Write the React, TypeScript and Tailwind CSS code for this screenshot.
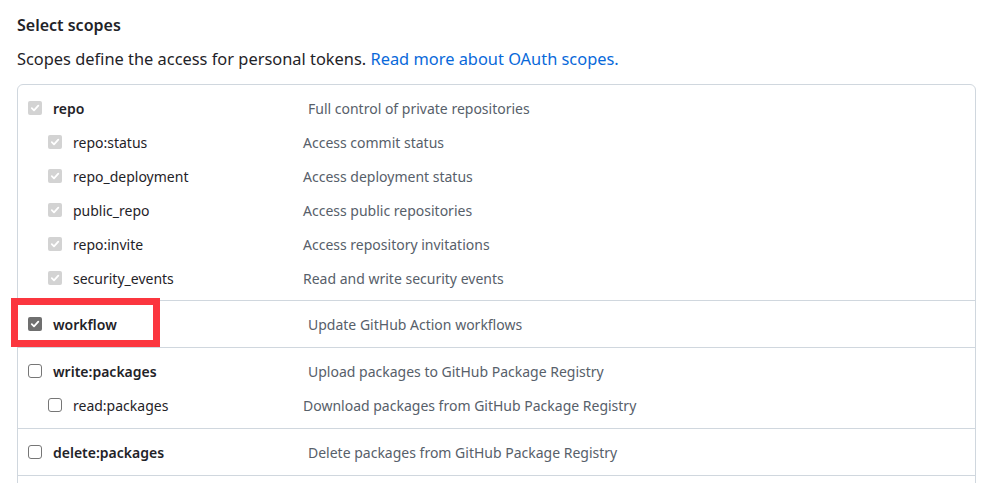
import React from 'react'

type State = 'disabled' | 'checked' | 'unchecked'

type Scope = {
  name: string
  desc: string
  state: State
  children?: { name: string; desc: string; state: State }[]
}

const SCOPES: Scope[] = [
  {
    name: 'repo',
    desc: 'Full control of private repositories',
    state: 'disabled',
    children: [
      { name: 'repo:status', desc: 'Access commit status', state: 'disabled' },
      { name: 'repo_deployment', desc: 'Access deployment status', state: 'disabled' },
      { name: 'public_repo', desc: 'Access public repositories', state: 'disabled' },
      { name: 'repo:invite', desc: 'Access repository invitations', state: 'disabled' },
      { name: 'security_events', desc: 'Read and write security events', state: 'disabled' },
    ],
  },
  { name: 'workflow', desc: 'Update GitHub Action workflows', state: 'checked' },
  {
    name: 'write:packages',
    desc: 'Upload packages to GitHub Package Registry',
    state: 'unchecked',
    children: [{ name: 'read:packages', desc: 'Download packages from GitHub Package Registry', state: 'unchecked' }],
  },
  { name: 'delete:packages', desc: 'Delete packages from GitHub Package Registry', state: 'unchecked' },
]

function Box({ state }: { state: State }) {
  if (state === 'unchecked') {
    return <span className="block shrink-0 w-[14px] h-[14px] rounded-[3px] border border-[#767676] bg-white" />
  }
  return (
    <span
      className={
        'flex shrink-0 items-center justify-center w-[14px] h-[14px] rounded-[2px] ' +
        (state === 'checked' ? 'bg-[#6f6f6f]' : 'bg-[#d3d3d3]')
      }
    >
      <svg width="10" height="10" viewBox="0 0 10 10" fill="none">
        <path d="M1.8 5.2 L4 7.3 L8.3 2.6" stroke="white" strokeWidth="1.8" strokeLinecap="round" strokeLinejoin="round" />
      </svg>
    </span>
  )
}

export default function App() {
  return (
    <div className="w-[994px] h-[483px] overflow-hidden bg-white text-[#1f2328]" style={{ fontFamily: '"Noto Sans", "Open Sans", sans-serif' }}>
      <div className="pl-[17px] pr-[18px] pt-[12px]">
        <h3 className="text-[16px] font-semibold leading-[26px]">Select scopes</h3>
        <p className="text-[16.4px] leading-[26px] mt-[8px]">
          Scopes define the access for personal tokens.{' '}
          <a className="text-[#0969da]">Read more about OAuth scopes.</a>
        </p>

        <div className="relative mt-[12px] border border-[#d0d7de] rounded-[6px]">
          {SCOPES.map((s, i) => (
            <div key={s.name} className={'border-b border-[#d0d7de] pt-[6px] ' + (i === 0 ? 'pb-[5px]' : 'pb-[6px]')}>
              <div className="flex items-center h-[34px] pl-[10px]">
                <Box state={s.state} />
                <span className="w-[266px] pl-[11px] text-[14px] font-semibold">{s.name}</span>
                <span className="text-[14px] text-[#57606a]">{s.desc}</span>
              </div>
              {s.children?.map(c => (
                <div key={c.name} className="flex items-center h-[34px] pl-[30px]">
                  <Box state={c.state} />
                  <span className="w-[241px] pl-[11px] text-[14px]">{c.name}</span>
                  <span className="text-[14px] text-[#57606a]">{c.desc}</span>
                </div>
              ))}
            </div>
          ))}
          <div className="h-[40px]" />

          {/* red highlight around workflow */}
          <div className="absolute left-[-7px] top-[213px] w-[149px] h-[49px] border-[7px] border-[#fb363f] pointer-events-none" />
        </div>
      </div>
    </div>
  )
}
